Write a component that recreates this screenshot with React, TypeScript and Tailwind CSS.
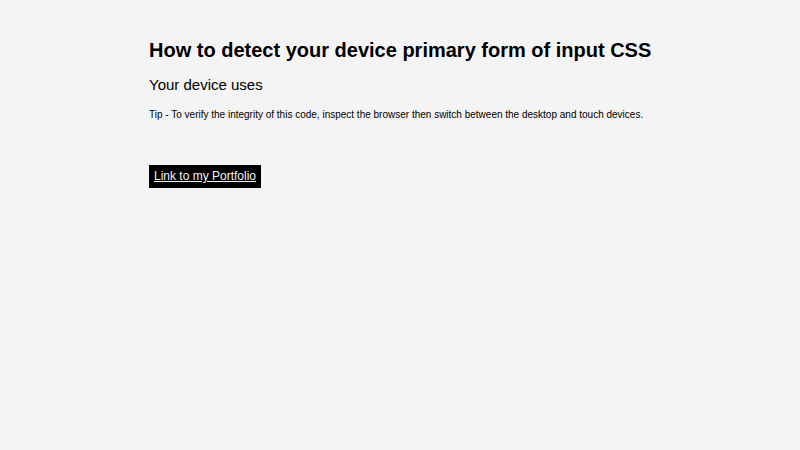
export default function App() {
  return (
    <div className="min-h-screen bg-[#f4f4f4] text-black font-['Liberation_Sans',Arial,sans-serif]">
      <div className="mx-auto w-[502px] pt-[38px]">
        <h1 className="text-[20px] font-bold leading-[24px] whitespace-nowrap">How to detect your device primary form of input CSS</h1>
        <h2 className="mt-[14px] text-[15px] leading-[18px]">Your device uses</h2>
        <p className="mt-[15px] text-[10px] leading-[12px] whitespace-nowrap">
          Tip - To verify the integrity of this code, inspect the browser then switch between the desktop and touch devices.
        </p>
        <div className="mt-[42px]">
          <a href="#" className="inline-block bg-black px-[5px] py-[4px] text-[12px] leading-[15px] text-[#f4f4f4] underline">
            Link to my Portfolio
          </a>
        </div>
      </div>
    </div>
  );
}
